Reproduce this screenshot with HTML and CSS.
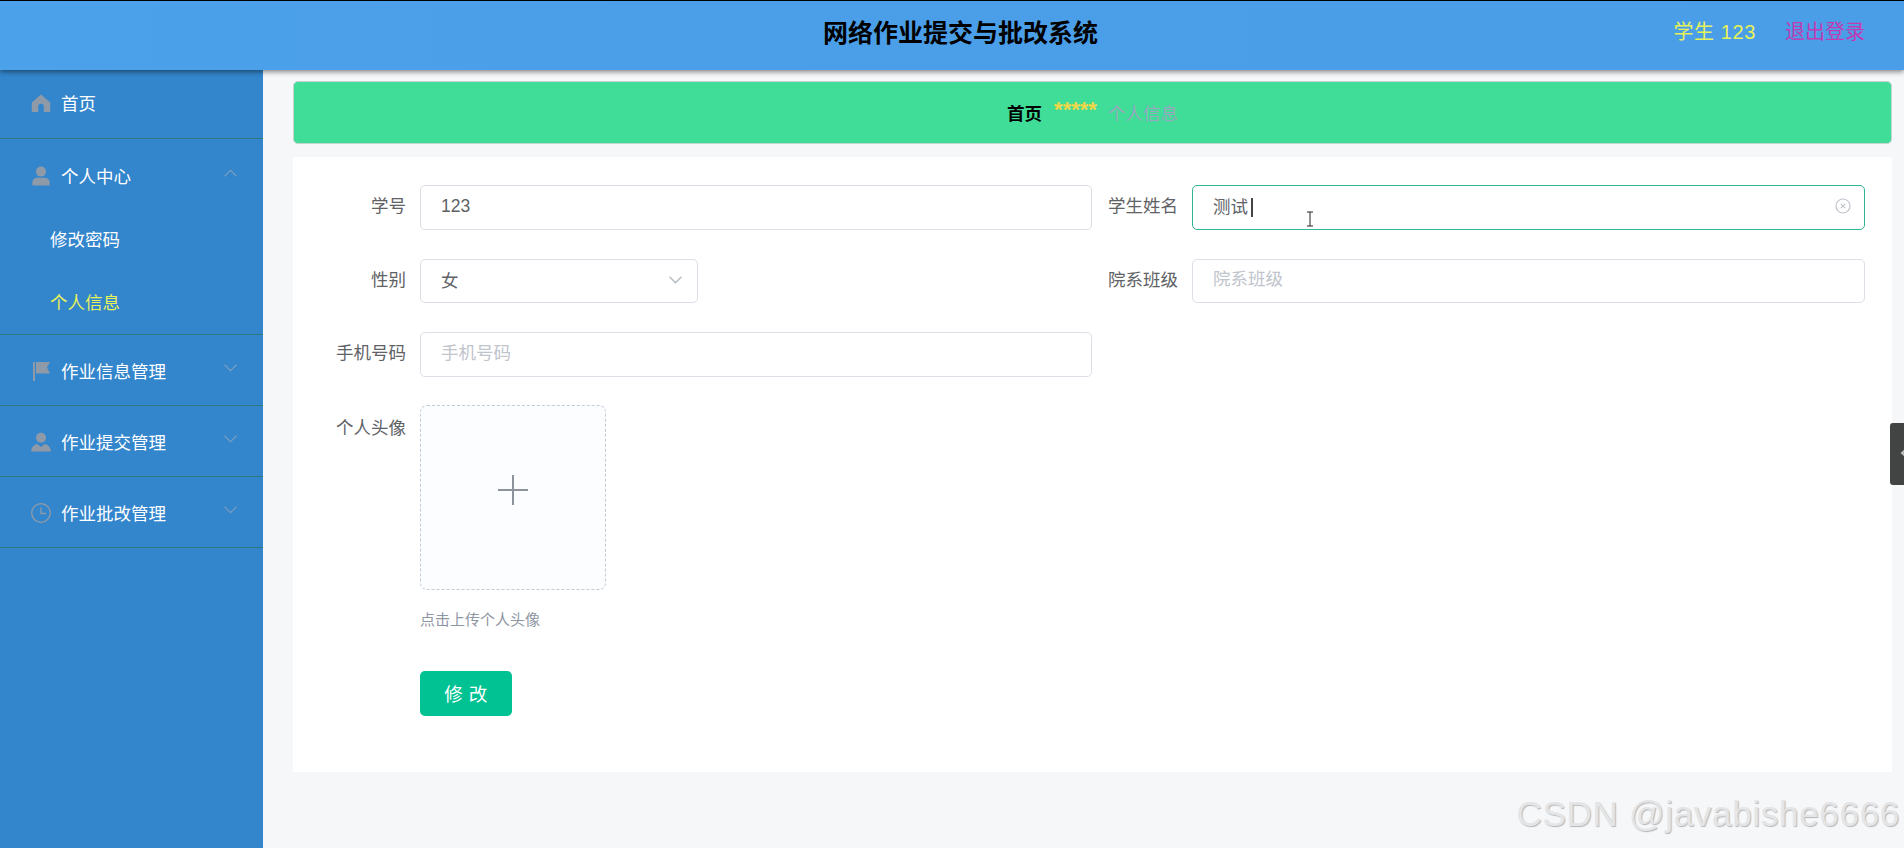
FILE: index.html
```html
<!DOCTYPE html>
<html>
<head>
    <meta charset="utf-8">
    <title>网络作业提交与批改系统</title>
    <link rel="stylesheet" href="styles.css">
</head>
<body>
    <header class="topbar">
        <h1 class="topbar-title">网络作业提交与批改系统</h1>
        <div class="topbar-user">
            <span class="user-name">学生 123</span>
            <a class="logout">退出登录</a>
        </div>
    </header>

    <div class="layout">
        <nav class="sidebar">
            <div class="menu-item menu-home">
                <svg class="menu-icon" viewBox="0 0 20 20"><path d="M10 1.5 0.8 9.5V19h6.4v-5.5a2.8 2.8 0 0 1 5.6 0V19h6.4V9.5z"/></svg>
                <span>首页</span>
            </div>
            <div class="menu-group">
                <div class="menu-item">
                    <svg class="menu-icon" viewBox="0 0 20 20"><circle cx="10" cy="5.6" r="5"/><path d="M1.4 19.5v-3.2c0-3 2.4-4.6 5-4.6h7.2c2.6 0 5 1.6 5 4.6v3.2z"/></svg>
                    <span>个人中心</span>
                    <svg class="menu-arrow" viewBox="0 0 12 7"><path d="M0.5 6.5 6 1l5.5 5.5"/></svg>
                </div>
                <div class="submenu-item">修改密码</div>
                <div class="submenu-item submenu-active">个人信息</div>
            </div>
            <div class="menu-item">
                <svg class="menu-icon" viewBox="0 0 20 20"><path d="M2 1h2v19H2zM5 1h14l-3 5.5 3 6H5z"/></svg>
                <span>作业信息管理</span>
                <svg class="menu-arrow" viewBox="0 0 12 7"><path d="M0.5 0.5 6 6l5.5-5.5"/></svg>
            </div>
            <div class="menu-item">
                <svg class="menu-icon" viewBox="0 0 20 20"><circle cx="10" cy="5.8" r="5"/><path d="M0 19.5c.6-4.400 2.800-6.800 6.200-7.500L10 15l3.800-3c3.400.7 5.600 3.100 6.200 7.500z"/></svg>
                <span>作业提交管理</span>
                <svg class="menu-arrow" viewBox="0 0 12 7"><path d="M0.5 0.5 6 6l5.5-5.5"/></svg>
            </div>
            <div class="menu-item">
                <svg class="menu-icon menu-icon-line" viewBox="0 0 20 20"><circle cx="10" cy="10" r="9.300"/><path d="M10 4.500V10.500h5"/></svg>
                <span>作业批改管理</span>
                <svg class="menu-arrow" viewBox="0 0 12 7"><path d="M0.5 0.5 6 6l5.5-5.5"/></svg>
            </div>
        </nav>

        <main class="content">
            <div class="breadcrumb">
                <b>首页</b>
                <span class="crumb-sep">*****</span>
                <span class="crumb-current">个人信息</span>
            </div>

            <form class="card">
                <label class="form-label">学号</label>
                <div class="field"><input class="input" value="123"></div>
                <label class="form-label">学生姓名</label>
                <div class="field">
                    <input class="input input-focus" value="测试">
                    <span class="caret"></span>
                    <svg class="clear-icon" viewBox="0 0 16 16"><circle cx="8" cy="8" r="7"/><path d="M5.800 5.800l4.400 4.400M10.200 5.800l-4.400 4.400"/></svg>
                    <svg class="text-cursor" viewBox="0 0 8 16"><path d="M1 1h6M4 1v14M1 15h6"/></svg>
                </div>

                <label class="form-label">性别</label>
                <div class="field">
                    <div class="select">
                        <span>女</span>
                        <svg class="select-arrow" viewBox="0 0 12 7"><path d="M0.500 0.500 6 6l5.500-5.500"/></svg>
                    </div>
                </div>
                <label class="form-label">院系班级</label>
                <div class="field"><input class="input" placeholder="院系班级"></div>

                <label class="form-label">手机号码</label>
                <div class="field"><input class="input" placeholder="手机号码"></div>
                <div class="filler"></div>

                <label class="form-label form-label-top">个人头像</label>
                <div class="upload-wrap">
                    <div class="upload">
                        <svg class="upload-plus" viewBox="0 0 30 30"><path d="M15 0v30M0 15h30"/></svg>
                    </div>
                    <div class="upload-tip">点击上传个人头像</div>
                    <button type="button" class="btn-submit">修 改</button>
                </div>
            </form>
        </main>
    </div>

    <div class="side-tab"><span></span></div>
    <div class="watermark">CSDN @javabishe6666</div>
</body>
</html>
```

FILE: styles.css
```css
* {
    box-sizing: border-box;
}
html, body {
    height: 100%;
}
body {
    margin: 0;
    overflow: hidden;
    background-color: #f6f7f9;
    color: #606266;
    font-family: "Liberation Sans", "Noto Sans CJK SC", sans-serif;
    font-size: 17.5px;
}

/* Top bar */
.topbar {
    position: relative;
    z-index: 2;
    display: flex;
    align-items: center;
    justify-content: center;
    height: 70px;
    padding: 0 0 10px 17px;
    border-top: 1px solid #000;
    background: linear-gradient(90deg, #4ba1ea, #4a9fe8 30%, #4a9ee7);
    box-shadow: 0 2px 5px rgba(0, 0, 0, 0.45);
}
.topbar-title {
    margin: 0;
    color: #000;
    font-size: 25px;
    font-weight: bold;
}
.topbar-user {
    position: absolute;
    top: 15px;
    right: 39px;
    display: flex;
    gap: 29px;
    font-size: 20px;
}
.user-name {
    color: #e6f25a;
    letter-spacing: 0.6px;
}
.logout {
    color: #c13bb4;
}

.layout {
    display: flex;
    height: 778px;
}

/* Sidebar */
.sidebar {
    flex: 0 0 263px;
    background-color: #3385cc;
    color: #fff;
}
.menu-item {
    display: flex;
    align-items: center;
    height: 71px;
    padding: 1px 0 0 31px;
    border-bottom: 1px solid #2f7a80;
}
.menu-home {
    height: 69px;
    padding-top: 0;
    padding-bottom: 3px;
}
.menu-group {
    border-bottom: 1px solid #2f7a80;
}
.menu-group .menu-item {
    border-bottom: none;
    height: 70px;
    padding-top: 3px;
}
.menu-icon {
    flex: none;
    width: 20px;
    height: 20px;
    margin-right: 10px;
    fill: #8f9aa8;
}
.menu-icon-line {
    fill: none;
    stroke: #8f9aa8;
    stroke-width: 1.300;
}
.menu-arrow {
    width: 13px;
    height: 8px;
    margin: -6px 0 0 auto;
    margin-right: 26px;
    fill: none;
    stroke: #7b9dbd;
    stroke-width: 1;
}
.submenu-item {
    height: 62.500px;
    padding-left: 50px;
    line-height: 62px;
}
.submenu-active {
    color: #e6f25a;
}

/* Main area */
.content {
    flex: 1;
    padding: 11px 12px 0 30px;
}
.breadcrumb {
    display: flex;
    align-items: center;
    justify-content: center;
    height: 63px;
    margin-bottom: 13px;
    border: 1px solid #c8d2d0;
    border-radius: 5px;
    background-color: #3fdd98;
}
.breadcrumb b {
    color: #000;
}
.crumb-sep {
    margin: -5px 11px 0 12px;
    color: #f1d748;
    font-size: 22px;
    font-weight: bold;
    line-height: 20px;
}
.crumb-current {
    color: #97a8be;
}

.card {
    display: grid;
    grid-template-columns: 127px 672px 100px 673px;
    grid-auto-rows: min-content;
    row-gap: 29px;
    height: 615px;
    padding-top: 28px;
    background-color: #fff;
}
.form-label {
    padding-right: 14px;
    line-height: 42px;
    text-align: right;
    white-space: nowrap;
}
.form-label-top {
    line-height: 44px;
}
.field {
    position: relative;
    height: 44.500px;
}
.filler {
    grid-column: span 2;
}
.input, .select {
    width: 100%;
    height: 100%;
    padding: 0 20px 2px;
    border: 1px solid #dcdfe6;
    border-radius: 5px;
    outline: none;
    background-color: #fff;
    color: #606266;
    font-family: inherit;
    font-size: 17.500px;
}
.input::placeholder {
    color: #c0c4cc;
}
.input-focus {
    padding-bottom: 4px;
    border-color: #2db596;
}
.caret {
    position: absolute;
    top: 13px;
    left: 59px;
    width: 2px;
    height: 19px;
    background-color: #444;
}
.clear-icon {
    position: absolute;
    top: 13px;
    right: 14px;
    width: 16px;
    height: 16px;
    fill: none;
    stroke: #c0c4cc;
    stroke-width: 1.200;
}
.text-cursor {
    position: absolute;
    top: 26px;
    left: 114px;
    width: 8px;
    height: 16px;
    fill: none;
    stroke: #222;
    stroke-width: 1;
}
.select {
    display: flex;
    align-items: center;
    justify-content: space-between;
    width: 278px;
    padding-right: 15px;
}
.select-arrow {
    width: 13px;
    height: 8px;
    fill: none;
    stroke: #b4b8bf;
    stroke-width: 1.200;
}
.upload-wrap {
    grid-column: 2 / 5;
    margin-top: -1px;
}
.upload {
    display: flex;
    align-items: center;
    justify-content: center;
    width: 186px;
    height: 185px;
    padding-bottom: 14px;
    border: 1px dashed #c0ccda;
    border-radius: 7px;
    background-color: #fbfdff;
}
.upload-plus {
    flex: none;
    width: 30px;
    height: 30px;
    fill: none;
    stroke: #8c939d;
    stroke-width: 2;
}
.upload-tip {
    margin-top: 20px;
    color: #8f96a3;
    font-size: 15px;
    line-height: 20px;
}
.btn-submit {
    display: block;
    width: 92px;
    height: 45px;
    margin-top: 41px;
    border: none;
    border-radius: 5px;
    background-color: #00c292;
    color: #fff;
    font-family: inherit;
    font-size: 18.500px;
    letter-spacing: 0.500px;
}

/* Overlays */
.side-tab {
    position: absolute;
    top: 423px;
    right: 0;
    width: 14px;
    height: 62px;
    border-radius: 3px 0 0 3px;
    background-color: #424443;
}
.side-tab span {
    position: absolute;
    top: 27px;
    left: 12px;
    width: 6px;
    height: 6px;
    border-bottom: 2px solid #bbb;
    border-left: 2px solid #bbb;
    transform: rotate(45deg);
}
.watermark {
    position: absolute;
    right: 4px;
    bottom: 14px;
    color: #e4e5e7;
    font-size: 35px;
    letter-spacing: 0.700px;
    text-shadow: 1px 1px 1px #b5b7b9;
    white-space: nowrap;
}
```
